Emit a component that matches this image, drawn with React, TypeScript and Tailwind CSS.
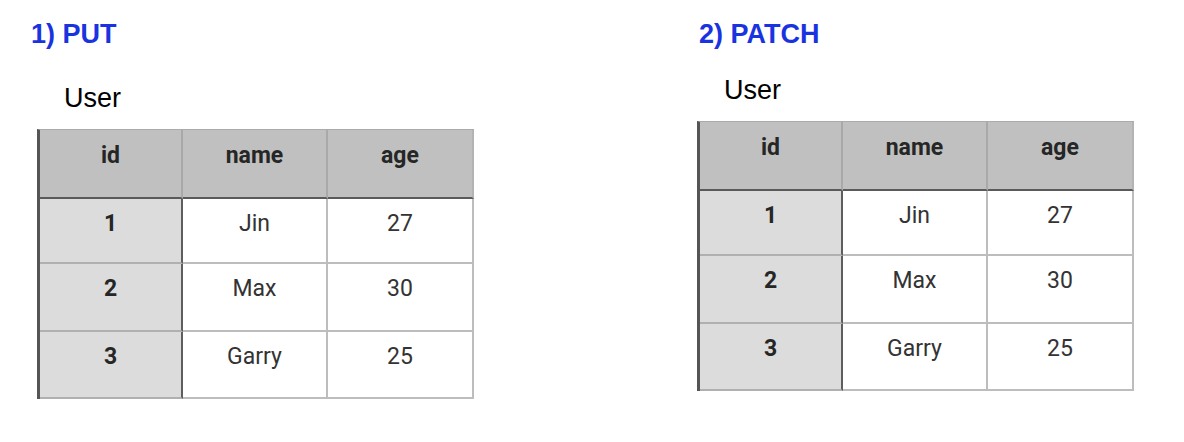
import React from "react";

const users = [
  { id: "1", name: "Jin", age: "27", h: "h-[65px]" },
  { id: "2", name: "Max", age: "30", h: "h-[68px]" },
  { id: "3", name: "Garry", age: "25", h: "h-[67px]" },
];

const cellFont = { fontFamily: "Roboto, 'Noto Sans', sans-serif" };

const UserTable = () => {
  return (
    <div
      className="w-[437px] border-l-[3px] border-t border-l-[#555] border-t-[#ababab]"
      style={cellFont}
    >
      <div className="grid grid-cols-[143px_145px_146px] bg-[#bfc0bf] text-[23px] leading-[28px] font-bold text-[#262626]">
        <div className="h-[69px] pt-[12px] text-center border-b-2 border-r-2 border-b-[#5a5a5a] border-r-[#a9a9a9]">
          id
        </div>
        <div className="h-[69px] pt-[12px] text-center border-b-2 border-r-2 border-b-[#5a5a5a] border-r-[#a9a9a9]">
          name
        </div>
        <div className="h-[69px] pt-[12px] text-center border-b-2 border-r-2 border-b-[#5a5a5a] border-r-[#b3b3b3]">
          age
        </div>
      </div>

      {users.map((u) => (
        <div
          key={u.id}
          className="grid grid-cols-[143px_145px_146px] text-[23px] leading-[28px] text-[#333]"
        >
          <div
            className={`${u.h} pt-[11px] text-center bg-[#dcdcdc] font-bold text-[#262626] border-b-2 border-r-2 border-b-[#b0b0b0] border-r-[#5e5e5e]`}
          >
            {u.id}
          </div>
          <div
            className={`${u.h} pt-[11px] text-center bg-white border-b-2 border-r-2 border-[#bdbdbd]`}
          >
            {u.name}
          </div>
          <div
            className={`${u.h} pt-[11px] text-center bg-white border-b-2 border-r-2 border-[#bdbdbd]`}
          >
            {u.age}
          </div>
        </div>
      ))}
    </div>
  );
};

const titleFont = { fontFamily: "'Liberation Sans', Arial, sans-serif" };

export default function App() {
  return (
    <div className="w-[1184px] h-[442px] bg-white flex" style={titleFont}>
      <div className="ml-[31px] pt-[18px] flex flex-col">
        <h2 className="text-[27px] leading-[32px] font-bold text-[#1a33e0]">
          1) PUT
        </h2>
        <p className="mt-[32px] ml-[33px] text-[27px] leading-[32px] text-black">
          User
        </p>
        <div className="mt-[15px] ml-[6px]">
          <UserTable />
        </div>
      </div>

      <div className="ml-[223px] pt-[18px] flex flex-col">
        <h2 className="ml-[2px] text-[27px] leading-[32px] font-bold text-[#1a33e0]">
          2) PATCH
        </h2>
        <p className="mt-[24px] ml-[27px] text-[27px] leading-[32px] text-black">
          User
        </p>
        <div className="mt-[15px]">
          <UserTable />
        </div>
      </div>
    </div>
  );
}
